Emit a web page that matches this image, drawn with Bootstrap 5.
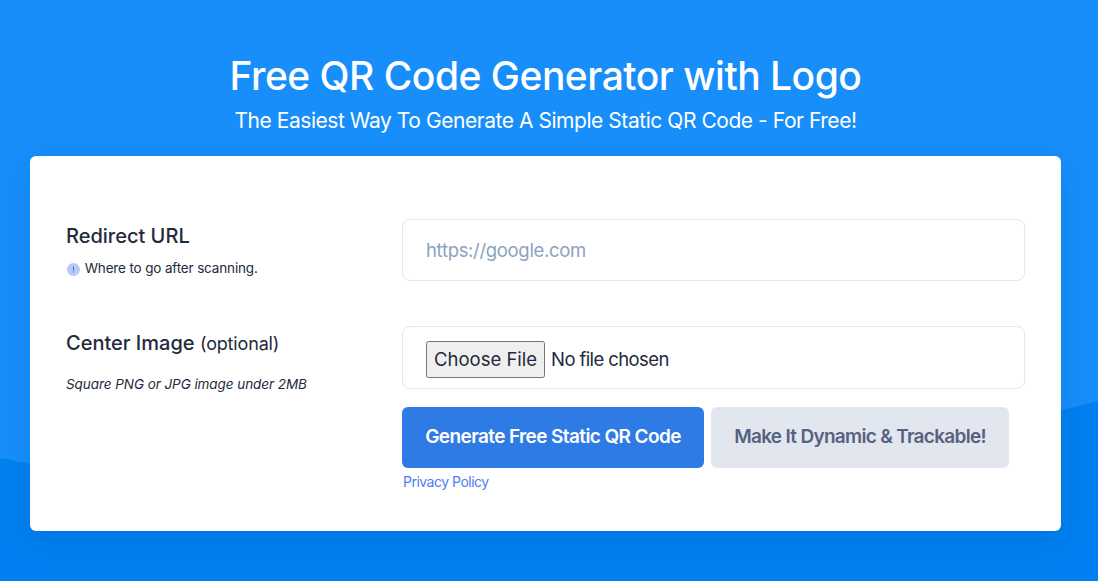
<!DOCTYPE html>
<html lang="en">
<head>
  <meta charset="UTF-8">
  <title>Free QR Code Generator with Logo</title>
  <meta name="viewport" content="width=device-width, initial-scale=1">
  <link href="https://cdn.jsdelivr.net/npm/bootstrap@5.3.3/dist/css/bootstrap.min.css" rel="stylesheet">
  <style>
    body { background-color: #0080f0; font-family: "Inter", "Liberation Sans", sans-serif; color: #232a3d; min-height: 581px; overflow: hidden; }
    .bg-wave { position: absolute; top: 0; left: 0; width: 100%; height: 581px; z-index: 0; }
    .page-wrap { position: relative; z-index: 1; padding: 54px 37px 0 30px; }
    .page-title { font-size: 39px; line-height: 44px; font-weight: 500; color: #fff; margin-bottom: 8px; letter-spacing: -0.5px; }
    .page-sub { font-size: 21px; line-height: 30px; color: #fff; margin-bottom: 20px; letter-spacing: -0.45px; }
    .form-box { border-radius: 6px; padding: 63px 36px 38px; height: 375px; box-shadow: 0 10px 30px rgba(0, 60, 130, .15); }
    .label-col { width: 336px; flex-shrink: 0; padding-top: 4px; }
    .field-col { flex-grow: 1; }
    .field-label { font-size: 20px; line-height: 26px; font-weight: 500; margin-bottom: 9px; color: #232a3d; }
    .field-label span { font-weight: 400; font-size: 18px; letter-spacing: -0.16px; }
    .field-hint { font-size: 13.5px; line-height: 20px; letter-spacing: -0.15px; }
    .hint-lower { margin-top: 17px; letter-spacing: -0.06px; }
    .info-dot { width: 13px; height: 13px; margin: 0 1px 0 1px; vertical-align: -3px; }
    .field-box { height: 62px; border: 1px solid #e2e6ef; border-radius: 8px; padding: 0 23px; font-size: 18.5px; letter-spacing: -0.32px; color: #232a3d; }
    .field-box::placeholder { color: #8ca2bf; }
    .field-box:focus { outline: 0; box-shadow: none; border-color: #e2e6ef; }
    .row-two { margin-top: 45px; }
    .file-box { height: 63px; display: flex; align-items: center; padding-top: 4px; }
    .file-box input { font-size: 18.5px; letter-spacing: -0.6px; width: 100%; color: #232a3d; }
    .file-box input::file-selector-button { height: 37px; color: #232a3d; margin-right: 6px; }
    .btn-row { margin-top: 18px; gap: 7px; }
    .btn-make { height: 61px; font-size: 19px; font-weight: 600; border-radius: 6px; border: 0; padding: 0; white-space: nowrap; }
    .btn-static { background: #2f7be5; color: #fff; width: 302px; letter-spacing: -0.6px; }
    .btn-dynamic { background: #e2e6ef; color: #56627f; width: 298px; letter-spacing: -0.7px; }
    .policy-link { font-size: 14px; color: #4f7cf0; text-decoration: none; line-height: 20px; letter-spacing: -0.5px; padding-left: 1px; }
  </style>
</head>
<body>
  <svg class="bg-wave" viewBox="0 0 1098 581" preserveAspectRatio="none" aria-hidden="true">
    <path d="M0 0H1098V401C800 480 300 520 0 458Z" fill="#178efa"/>
  </svg>
  <div class="page-wrap">
    <div class="text-center">
      <h1 class="page-title">Free QR Code Generator with Logo</h1>
      <p class="page-sub">The Easiest Way To Generate A Simple Static QR Code - For Free!</p>
    </div>
    <div class="form-box bg-white">
      <div class="d-flex">
        <div class="label-col">
          <div class="field-label">Redirect URL</div>
          <div class="field-hint">
            <svg class="info-dot" viewBox="0 0 13 13"><circle cx="6.5" cy="6.5" r="6.5" fill="#b9c9f5"/><rect x="6" y="3.5" width="1" height="4" fill="#3f6fe0"/><rect x="6" y="8.5" width="1" height="1" fill="#3f6fe0"/></svg>
            Where to go after scanning.
          </div>
        </div>
        <div class="field-col">
          <input type="text" class="form-control field-box" placeholder="https://google.com">
        </div>
      </div>
      <div class="d-flex row-two">
        <div class="label-col">
          <div class="field-label">Center Image <span>(optional)</span></div>
          <div class="field-hint fst-italic hint-lower">Square PNG or JPG image under 2MB</div>
        </div>
        <div class="field-col">
          <div class="field-box file-box"><input type="file"></div>
          <div class="d-flex btn-row">
            <button type="button" class="btn btn-make btn-static">Generate Free Static QR Code</button>
            <button type="button" class="btn btn-make btn-dynamic">Make It Dynamic &amp; Trackable!</button>
          </div>
          <a href="#" class="policy-link d-block mt-1">Privacy Policy</a>
        </div>
      </div>
    </div>
  </div>
  <script src="https://cdn.jsdelivr.net/npm/bootstrap@5.3.3/dist/js/bootstrap.bundle.min.js"></script>
</body>
</html>
